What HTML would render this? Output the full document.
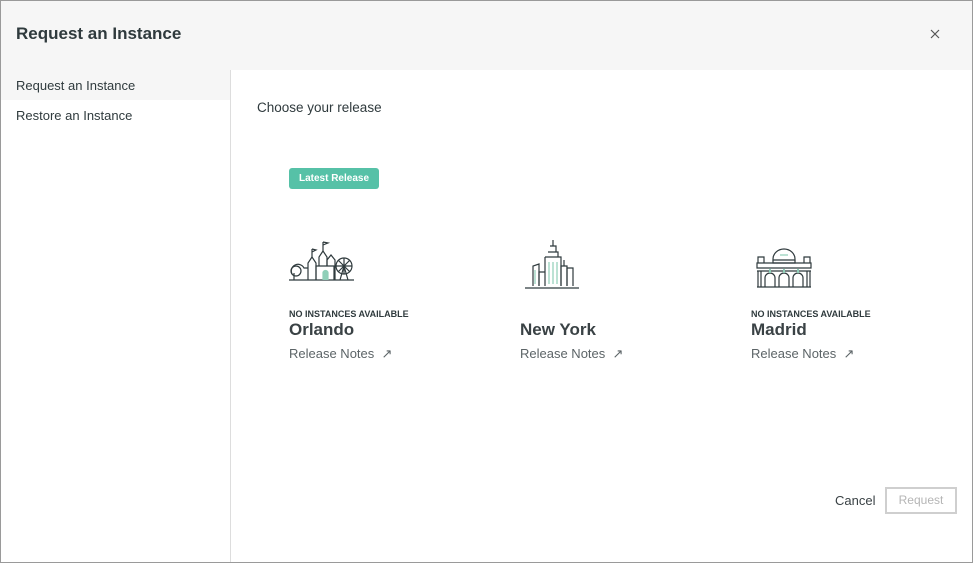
<!DOCTYPE html>
<html><head><meta charset="utf-8"><style>
*{box-sizing:border-box;margin:0;padding:0}
body{width:973px;height:563px;overflow:hidden;font-family:"Liberation Sans",sans-serif;color:#2f3a3d;background:#fff}
.frame{position:absolute;left:0;top:0;width:973px;height:563px;border:1px solid #9a9a9a}
.hdr{position:absolute;left:1px;top:1px;width:971px;height:69px;background:#f6f6f6}
.hdr h1{position:absolute;left:15px;top:23px;font-size:17px;font-weight:bold;color:#2f3a3d}
.x{position:absolute;left:928px;top:27px;width:12px;height:12px}
.side{position:absolute;left:1px;top:70px;width:230px;height:492px;border-right:1px solid #ddd}
.item{height:30px;padding-left:15px;line-height:31px;font-size:13px;color:#2f3a3d}
.item.act{background:#f6f6f6}
.t{position:absolute;font-size:13.5px}
.badge{position:absolute;left:289px;top:168px;width:90px;height:21px;background:#56c1a7;color:#fff;border-radius:3px;font-size:10px;font-weight:bold;text-align:center;line-height:21px}
.na{position:absolute;font-size:9px;font-weight:bold;color:#2f3a3d}
.city{position:absolute;font-size:17px;font-weight:bold;color:#3a4245}
.rn{position:absolute;font-size:13px;color:#5c6467}
.cancel{position:absolute;left:835px;top:493px;font-size:13px;color:#3a4245}
.req{position:absolute;left:885px;top:487px;width:72px;height:27px;border:2px solid #cfcfcf;color:#b5b5b5;font-size:12px;text-align:center;line-height:23px}
svg.ic{position:absolute;fill:none;stroke:#2f3a3d;stroke-width:1.2}
</style></head><body>
<div class="frame"></div>
<div class="hdr"><h1>Request an Instance</h1>
<svg class="x" viewBox="0 0 12 12"><path d="M2 2L10 10M10 2L2 10" stroke="#555" stroke-width="1.2"/></svg></div>
<div class="side"><div class="item act">Request an Instance</div><div class="item">Restore an Instance</div></div>
<div class="t" style="left:257px;top:100px">Choose your release</div>
<div class="badge">Latest Release</div>

<svg class="ic" style="left:288px;top:238px" width="68" height="45" viewBox="0 0 68 45">
<path d="M1 42H66"/><path d="M6 42V35M4 36A6 6 0 0 1 16 30L20 30"/><circle cx="8" cy="33" r="5"/>
<path d="M20 42V25L24 19L28 25V42"/><path d="M28 42V28H46V42"/><path d="M31 28V19L35 13L39 19V28"/><path d="M39 28V22L43 17L47 22V42"/>
<path d="M24 19V11M24 11L28 12L24 14"/><path d="M35 13V4M35 4L40 5L35 7"/>
<path d="M35 42V35A2.5 2.5 0 0 1 40 35V42" fill="#8fcfb8" stroke="#8fcfb8"/>
<circle cx="56" cy="28" r="8"/><path d="M56 20V36M48 28H64M50 22L62 34M62 22L50 34"/><path d="M52 42L56 28L60 42"/>
</svg>

<svg class="ic" style="left:523px;top:238px" width="58" height="52" viewBox="0 0 58 52">
<path d="M2 50H56"/><path d="M30 2V8M27 8H33V14M25 14H35V19M22 19H38V48M22 19V48"/>
<path d="M26 24V46M30 24V46M34 24V46" stroke="#8fcfb8"/>
<path d="M10 48V28L16 26V48"/><path d="M16 48V34H22"/><path d="M38 48V28H44V48"/><path d="M41 28V22"/><path d="M44 48V30H50V48"/>
<path d="M12 32V46" stroke="#8fcfb8"/>
</svg>

<svg class="ic" style="left:755px;top:245px" width="58" height="44" viewBox="0 0 58 44">
<path d="M18 14A11 10 0 0 1 40 14V15H18Z"/><path d="M18 15V18H40V15"/><path d="M25 10H33" stroke="#8fcfb8"/>
<path d="M3 18V12H9V18M49 18V12H55V18"/><path d="M2 18H56V23H2Z"/><path d="M2 26H56"/>
<path d="M3 42V26M6 42V26M52 42V26M55 42V26"/>
<path d="M10 42V33A5 5 0 0 1 20 33V42M24 42V33A5 5 0 0 1 34 33V42M38 42V33A5 5 0 0 1 48 33V42"/>
<path d="M15 24V28M29 24V28M43 24V28" stroke="#8fcfb8" stroke-width="2"/>
<path d="M2 42H56"/>
</svg>

<div class="na" style="left:289px;top:309px">NO INSTANCES AVAILABLE</div>
<div class="city" style="left:289px;top:320px">Orlando</div>
<div class="rn" style="left:289px;top:346px">Release Notes &nbsp;↗</div>

<div class="city" style="left:520px;top:320px">New York</div>
<div class="rn" style="left:520px;top:346px">Release Notes &nbsp;↗</div>

<div class="na" style="left:751px;top:309px">NO INSTANCES AVAILABLE</div>
<div class="city" style="left:751px;top:320px">Madrid</div>
<div class="rn" style="left:751px;top:346px">Release Notes &nbsp;↗</div>

<div class="cancel">Cancel</div>
<div class="req">Request</div>
</body></html>
